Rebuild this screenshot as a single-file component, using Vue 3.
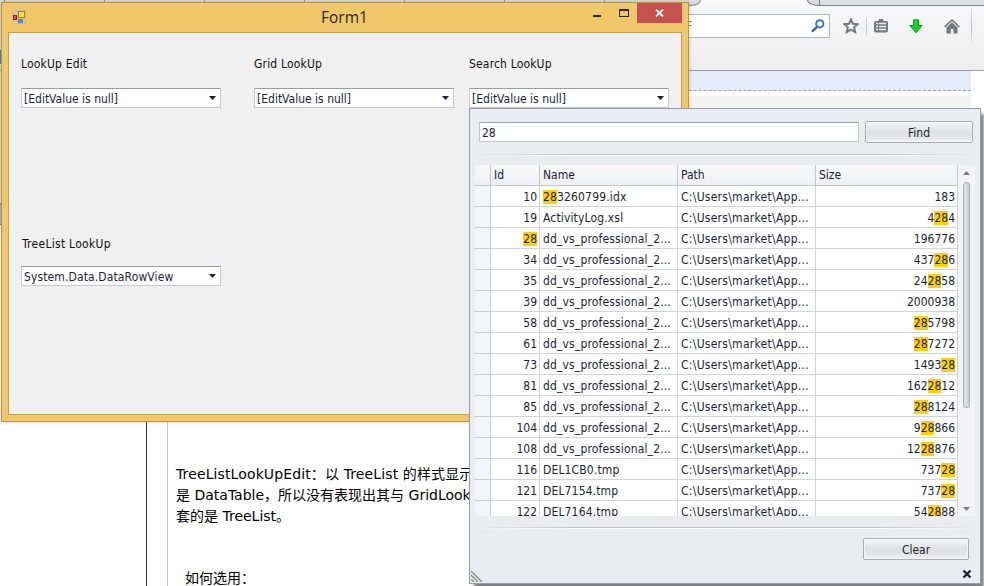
<script setup>
import {ref, computed} from 'vue';

const keyword = ref('28');

const editors = [
  {label: 'LookUp Edit', value: '[EditValue is null]'},
  {label: 'Grid LookUp', value: '[EditValue is null]'},
  {label: 'Search LookUp', value: '[EditValue is null]'},
  {label: 'TreeList LookUp', value: 'System.Data.DataRowView'},
];

const files = [
  ['10', '283260799.idx', '183'],
  ['19', 'ActivityLog.xsl', '4284'],
  ['28', 'dd_vs_professional_2...', '196776'],
  ['34', 'dd_vs_professional_2...', '437286'],
  ['35', 'dd_vs_professional_2...', '242858'],
  ['39', 'dd_vs_professional_2...', '2000938'],
  ['58', 'dd_vs_professional_2...', '285798'],
  ['61', 'dd_vs_professional_2...', '287272'],
  ['73', 'dd_vs_professional_2...', '149328'],
  ['81', 'dd_vs_professional_2...', '1622812'],
  ['85', 'dd_vs_professional_2...', '288124'],
  ['104', 'dd_vs_professional_2...', '928866'],
  ['108', 'dd_vs_professional_2...', '1228876'],
  ['116', 'DEL1CB0.tmp', '73728'],
  ['121', 'DEL7154.tmp', '73728'],
  ['122', 'DEL7164.tmp', '542888'],
];

// Split a cell around the first match so it can be highlighted
const split = (text) => {
  const at = keyword.value ? text.indexOf(keyword.value) : -1;
  if (at < 0) return [text, '', ''];
  const end = at + keyword.value.length;
  return [text.slice(0, at), text.slice(at, end), text.slice(end)];
};

const rows = computed(() => files.map(([id, name, size]) => [
  {key: 'id', parts: split(id)},
  {key: 'name', parts: split(name)},
  {key: 'path', parts: ['C:\\Users\\market\\App...', '', '']},
  {key: 'size', parts: split(size)},
]));
</script>

<template>
  <div class="desktop">
    <!-- Browser behind the form -->
    <div class="tab-strip">
      <div class="tab-group left"></div>
      <div class="tab-group right"></div>
    </div>
    <div class="toolbar">
      <div class="url-box">
        <span>F</span>
        <svg class="search-icon" width="14" height="14" viewBox="0 0 14 14">
          <circle cx="8.8" cy="4.8" r="3.6" fill="none" stroke="#3a76b5" stroke-width="2"/>
          <path d="M6 7.8L1 12.6" stroke="#3668a8" stroke-width="2.4"/>
        </svg>
      </div>
      <svg class="star" width="16" height="16" viewBox="0 0 16 16">
        <path d="M8 1.4L9.9 5.7L14.6 6.2L11.1 9.3L12.2 14.1L8 11.6L3.8 14.1L4.9 9.3L1.4 6.2L6.1 5.7Z" fill="none" stroke="#75777b" stroke-width="2"/>
      </svg>
      <div class="divider"></div>
      <svg class="list" width="14" height="15" viewBox="0 0 14 15">
        <path d="M2 3H4.5L5 1H9L9.5 3H12Q14 3 14 5V12.5Q14 14.5 12 14.5H2Q0 14.5 0 12.5V5Q0 3 2 3Z" fill="#75777b"/>
        <path d="M2 5.5H4M5 5.5H12M2 8.5H4M5 8.5H12M2 11.5H4M5 11.5H12" stroke="#f2f2f2" stroke-width="1.4"/>
      </svg>
      <svg class="download" width="14" height="15" viewBox="0 0 14 15">
        <path d="M4.5 .8H9.5V6.5H13.2L7 13.8L.8 6.5H4.5Z" fill="#12d52c" stroke="#0d9a20"/>
      </svg>
      <svg class="home" width="16" height="15" viewBox="0 0 16 15">
        <path d="M.7 7.8L8 1L15.3 7.8" fill="none" stroke="#75777b" stroke-width="1.6"/>
        <path d="M2.5 8.5L8 3.3L13.5 8.5V14.5H9.5V10H6.8V14.5H2.5Z" fill="#75777b"/>
      </svg>
      <div class="divider tall"></div>
    </div>
    <div class="page-band"></div>
    <div class="page-body">
      <div class="article">
        <p class="intro">TreeListLookUpEdit：以 TreeList 的样式显示</p>
        <p>是 DataTable，所以没有表现出其与 GridLook</p>
        <p>套的是 TreeList。</p>
        <p class="next">如何选用：</p>
      </div>
    </div>
    <div class="edge"></div>

    <!-- Form1 window -->
    <div class="form">
      <div class="title-bar">
        <svg class="app-icon" width="14" height="14" viewBox="0 0 14 14">
          <path d="M.5 .5H13.5V13.5H.5ZM.5 4.5H13.5M5.5 0V14" fill="none" stroke="#c3bfae"/>
          <rect x="6.5" y="1.5" width="6" height="6" fill="#ffd83c" stroke="#b67b0c"/>
          <rect x="1.5" y="5.5" width="3" height="4" fill="#e05345" stroke="#981b18"/>
          <rect x="6" y="9" width="5" height="4" fill="#4d86e4"/>
        </svg>
        <div class="title">Form1</div>
        <div class="caption-buttons">
          <div class="minimize"></div>
          <div class="maximize"></div>
          <div class="close">
            <svg width="9" height="8" viewBox="0 0 9 8">
              <path d="M1 .5L8 7.5M8 .5L1 7.5" stroke="#fff" stroke-width="1.8"/>
            </svg>
          </div>
        </div>
      </div>
      <div class="client">
        <div v-for="editor in editors" :key="editor.label" class="editor">
          <div class="label">{{ editor.label }}</div>
          <div class="combo">
            <span>{{ editor.value }}</span>
            <svg width="7" height="4" viewBox="0 0 7 4"><path d="M0 0H7L3.5 4Z" fill="#1e1e35"/></svg>
          </div>
        </div>
      </div>
    </div>

    <!-- Search popup -->
    <div class="popup">
      <div class="search-row">
        <div class="search-input">{{ keyword }}</div>
        <button class="btn find">Find</button>
      </div>
      <div class="separator"></div>
      <div class="grid-box">
        <div class="grid">
          <div class="row header">
            <div class="cell indicator"></div>
            <div class="cell">Id</div>
            <div class="cell">Name</div>
            <div class="cell">Path</div>
            <div class="cell">Size</div>
          </div>
          <div v-for="(row, i) in rows" :key="i" class="row">
            <div class="cell indicator"></div>
            <div v-for="cell in row" :key="cell.key" class="cell" :class="cell.key">{{ cell.parts[0] }}<mark v-if="cell.parts[1]">{{ cell.parts[1] }}</mark>{{ cell.parts[2] }}</div>
          </div>
        </div>
        <div class="scrollbar">
          <svg width="7" height="4" viewBox="0 0 7 4"><path d="M0 4H7L3.5 0Z" fill="#7b7d88"/></svg>
          <div class="thumb"></div>
          <svg width="7" height="4" viewBox="0 0 7 4"><path d="M0 0H7L3.5 4Z" fill="#7b7d88"/></svg>
        </div>
      </div>
      <div class="separator"></div>
      <button class="btn clear">Clear</button>
      <div class="footer">
        <svg class="grip" width="12" height="12" viewBox="0 0 12 12">
          <path d="M0 1L11 12M0 5L7 12M0 9L3 12" stroke="#85878f" stroke-width="1.3"/>
        </svg>
        <svg class="dismiss" width="10" height="8" viewBox="0 0 10 8">
          <path d="M1.5 .5L8.5 7.5M8.5 .5L1.5 7.5" stroke="#1e1e35" stroke-width="2.2"/>
        </svg>
      </div>
    </div>
  </div>
</template>

<style>
body {
  margin: 0;
  overflow: hidden;
}
</style>

<style scoped>
.desktop {
  position: relative;
  width: 984px;
  height: 586px;
  overflow: hidden;
  box-sizing: border-box;
  background: #fff;
  color: #1e1e35;
  font-family: "DejaVu Sans Condensed", "DejaVu Sans", sans-serif;
  font-size: 12px;
  font-stretch: condensed;
}

.desktop * {
  box-sizing: border-box;
}

/* Browser */
.tab-strip {
  display: flex;
  justify-content: space-between;
  height: 6px;
  background: #f8f8f8;
}

.tab-group {
  background: #dcdcdc;
  border-bottom: 1px solid #7d828c;
}

.tab-group.left {
  width: 701px;
  border-right: 1px solid #7d828c;
  border-bottom-right-radius: 10px 6px;
  background: repeating-linear-gradient(90deg, #dcdcdc 0 99px, #999 99px 100px) 5px 0;
}

.tab-group.right {
  width: 177px;
  border-left: 1px solid #7d828c;
  border-bottom-left-radius: 12px 6px;
  background: linear-gradient(90deg, #dcdcdc 11px, #777 11px 12px, #dfdfdf 12px);
}

.toolbar {
  display: flex;
  align-items: flex-start;
  height: 65px;
  padding-top: 8px;
  background: linear-gradient(#f7f7f7, #eee);
  border-bottom: 1px solid #9b9da5;
}

.url-box {
  display: flex;
  justify-content: space-between;
  width: 330px;
  height: 24px;
  margin-left: 500px;
  padding: 4px 4px 0 185px;
  background: #fff;
  border: 1px solid #abb5c3;
  color: #777;
}

.star {
  margin: 4px 0 0 13px;
}

.divider {
  width: 1px;
  height: 17px;
  margin: 4px 0 0 7px;
  background: #c3cbd5;
}

.list {
  margin: 4px 0 0 7px;
}

.download {
  margin: 5px 0 0 21px;
}

.home {
  margin: 5px 0 0 21px;
}

.divider.tall {
  height: 36px;
  margin: -6px 0 0 11px;
  background: linear-gradient(#dfe3e8, #b0bac5, #e8e8e8);
}

.page-band {
  width: 971px;
  height: 20px;
  background: #e5ecf7;
  border-bottom: 1px dashed #a0a3a8;
}

.page-body {
  height: 495px;
  padding-left: 146px;
  background: linear-gradient(#f4f4f4, #f4f4f4) 0 5px / 971px 14px no-repeat;
}

.article {
  height: 100%;
  margin: 0;
  padding: 373px 0 0 29px;
  border-left: 1px solid #333;
  background: linear-gradient(#c8c8c8, #c8c8c8) 20px 0 / 1px 100% no-repeat;
  color: #000;
  font-family: "DejaVu Sans", "Noto Sans CJK SC", sans-serif;
  font-size: 14px;
  font-stretch: normal;
  line-height: 21px;
  white-space: nowrap;
}

.article p {
  margin: 0;
}

.article .intro {
  letter-spacing: 0.12px;
}

.article .next {
  margin: 41px 0 0 9px;
}

/* Strip of the page still visible left of the form */
.edge {
  position: absolute;
  left: 0;
  top: 0;
  width: 1px;
  height: 225px;
  background: linear-gradient(#dedede 50px, #3f86bd 50px 64px, #dedede 64px 70px, #9b9da5 70px 71px, #e9e9e9 71px 203px, #777 203px 204px, #9bb5e4 204px 224px, #777 224px);
}

/* Form window */
.form {
  position: absolute;
  left: 1px;
  top: 2px;
  width: 688px;
  height: 420px;
  padding: 0 6px 6px;
  background: #f0c869;
  border: 1px solid #b5954b;
  box-shadow: 0 0 4px rgba(0, 0, 0, 0.2);
}

.title-bar {
  display: flex;
  justify-content: space-between;
  height: 29px;
}

.app-icon {
  margin: 7px 0 0 4px;
}

.title {
  flex: 1;
  margin: 4px 0 0 295px;
  color: #292929;
  font-family: "Open Sans", sans-serif;
  font-size: 15.5px;
  font-stretch: normal;
  line-height: 21px;
}

.caption-buttons {
  display: flex;
}

.minimize {
  width: 8px;
  height: 2px;
  margin-top: 12px;
  background: #292929;
}

.maximize {
  width: 10px;
  height: 8px;
  margin: 6px 8px 0 18px;
  border: 1px solid #292929;
  border-top-width: 2px;
}

.close {
  display: flex;
  align-items: center;
  justify-content: center;
  width: 45px;
  height: 20px;
  background: #c75050;
}

.client {
  display: grid;
  grid-template-columns: 233px 215px 200px;
  grid-template-rows: 180px 100px;
  height: 383px;
  padding: 21px 0 0 12px;
  background: #f0f0f0;
  border: 1px solid #c3a055;
}

.label {
  height: 34px;
  color: #111;
  letter-spacing: 0.17px;
  line-height: 20px;
}

.editor:nth-child(4) .label {
  height: 32px;
  padding-left: 1px;
  letter-spacing: 0.28px;
}

.combo {
  display: flex;
  align-items: center;
  justify-content: space-between;
  width: 200px;
  height: 20px;
  padding: 0 4px 0 2px;
  background: #fff;
  border: 1px solid #c6c8d0;
  border-top-color: #9a9ba9;
}

.combo span {
  padding-top: 2px;
}

.editor:nth-child(4) .combo span {
  letter-spacing: 0.12px;
}

/* Popup */
.popup {
  position: absolute;
  left: 469px;
  top: 108px;
  display: flex;
  flex-direction: column;
  width: 512px;
  height: 476px;
  padding: 12px 5px 0;
  background: #ebecf0;
  border: 1px solid #989ba8;
  box-shadow: 4px 5px 3px -1px rgba(0, 0, 0, 0.5);
}

.search-row {
  display: flex;
  align-items: center;
  gap: 6px;
  padding: 0 2px 0 4px;
}

.search-input {
  width: 380px;
  height: 20px;
  padding-left: 2px;
  background: #fff;
  border: 1px solid #c6c8d0;
  border-top-color: #9a9ba9;
  line-height: 20px;
}

.btn {
  height: 22px;
  padding: 2px 0 0;
  background: linear-gradient(#f5f5f7, #dedfe4 55%, #eeeff2);
  border: 1px solid #a8aab4;
  border-radius: 2px;
  box-shadow: inset 0 0 0 1px rgba(255, 255, 255, 0.5);
  color: #1e1e35;
  font: inherit;
}

.find {
  width: 108px;
}

.separator {
  flex: none;
  height: 2px;
  margin: 11px 0 9px;
  background: linear-gradient(90deg, #ebecf0, transparent 20%, transparent 80%, #ebecf0), linear-gradient(#c0c2ca 50%, #fff 50%);
}

.grid-box {
  display: flex;
  height: 351px;
  overflow: hidden;
}

.grid {
  width: 483px;
  background: #fff;
}

.row {
  display: grid;
  grid-template-columns: 16px 49px 138px 138px 142px;
  height: 21px;
}

.cell {
  height: 21px;
  padding: 0 2px 0 3px;
  border-right: 1px solid #d2d3d9;
  border-bottom: 1px solid #d2d3d9;
  line-height: 23px;
  white-space: nowrap;
}

.cell.indicator {
  background: #f4f5f8;
  border-color: #c9cbd3;
}

.id,
.size {
  text-align: right;
}

.name {
  letter-spacing: 0.15px;
}

.path {
  letter-spacing: 0.27px;
}

.header .cell {
  background: linear-gradient(#f8f8fa, #eff0f3);
  border-color: #c4c6ce;
  line-height: 21px;
}

mark {
  display: inline-block;
  height: 14px;
  background: #ffd000;
  color: inherit;
  line-height: 14px;
}

.scrollbar {
  display: flex;
  flex-direction: column;
  align-items: center;
  width: 17px;
  padding: 6px 0 5px;
  background: #f4f4f7;
}

.thumb {
  width: 7px;
  height: 226px;
  margin: 7px 0 auto;
  background: linear-gradient(90deg, #e4e5ea, #cccdd5);
  border: 1px solid #a8aab4;
  border-radius: 3px;
}

.clear {
  align-self: flex-end;
  width: 106px;
  margin-right: 6px;
}

.footer {
  display: flex;
  justify-content: space-between;
  margin: 10px 3px 0 -4px;
}
</style>
